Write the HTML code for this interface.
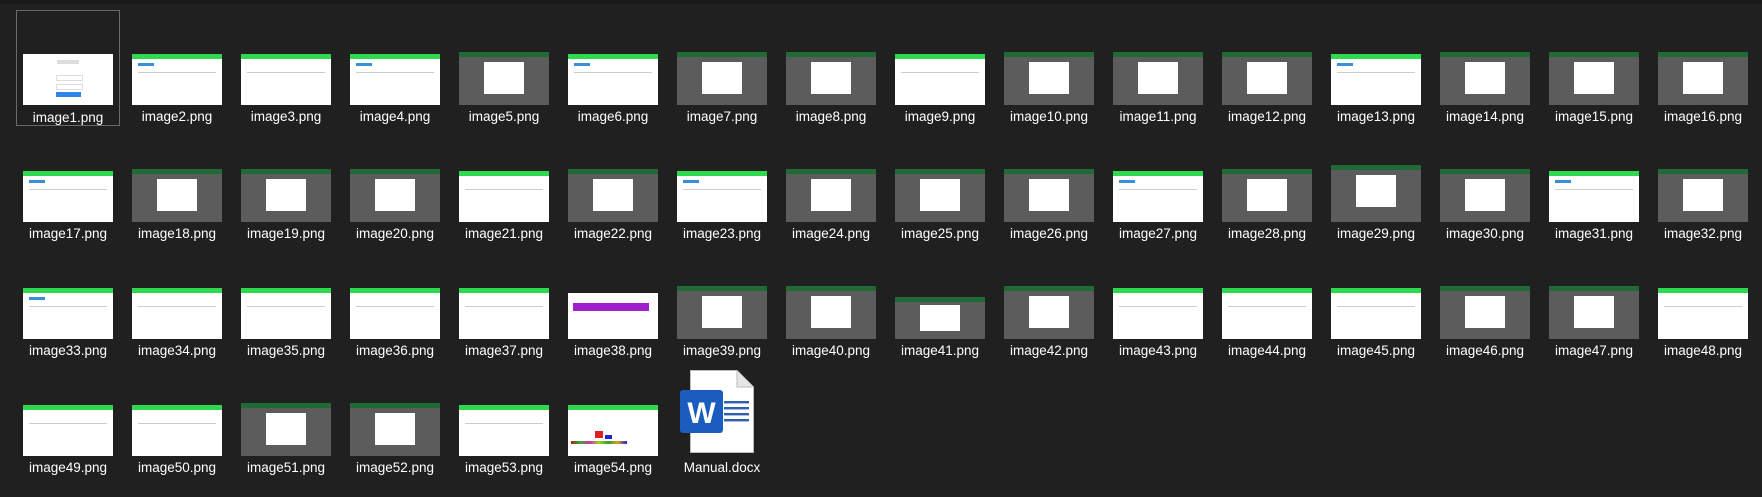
<!DOCTYPE html>
<html><head><meta charset="utf-8"><style>
body{margin:0;width:1762px;height:497px;background:#202020;overflow:hidden;font-family:"Liberation Sans",sans-serif;position:relative}
.top{position:absolute;left:0;top:0;width:1762px;height:4px;background:#191919}
.it{position:absolute;width:104px;height:116px}
.th{position:absolute;left:7px;bottom:21px;width:90px;height:51px;background:#fff;overflow:hidden}
.g:before{content:"";position:absolute;left:0;top:0;right:0;height:5px;background:#2ed84f}
.d{background:#5c5c5c;height:53px}
.d:before{content:"";position:absolute;left:0;top:0;right:0;height:5px;background:#1f6a35}
.d i{position:absolute;left:25px;top:10px;width:40px;height:32px;background:#fff}
.g b{position:absolute;left:6px;top:9px;width:16px;height:3px;background:#3a8fdc}
.g u{position:absolute;left:6px;top:18px;width:78px;height:1px;background:#ccc;text-decoration:none}
.lb{position:absolute;left:-10px;width:124px;top:99px;text-align:center;color:#fff;font-size:13.5px}
.sel{border:1px solid #6a6a6a;box-sizing:border-box}
</style></head><body><div class="top"></div>
<div class="it sel" style="left:16px;top:10px"><div class="th" style="left:6px;bottom:20px"><span style="position:absolute;left:34px;top:6px;width:22px;height:4px;background:#ddd"></span><span style="position:absolute;left:33px;top:21px;width:25px;height:4px;border:1px solid #ddd"></span><span style="position:absolute;left:33px;top:30px;width:25px;height:4px;border:1px solid #ddd"></span><span style="position:absolute;left:33px;top:38px;width:25px;height:5px;background:#2f86e8"></span></div><div class="lb" style="left:-11px">image1.png</div></div>
<div class="it" style="left:125px;top:10px"><div class="th g"><b></b><u></u></div><div class="lb">image2.png</div></div>
<div class="it" style="left:234px;top:10px"><div class="th g"><u></u></div><div class="lb">image3.png</div></div>
<div class="it" style="left:343px;top:10px"><div class="th g"><b></b><u></u></div><div class="lb">image4.png</div></div>
<div class="it" style="left:452px;top:10px"><div class="th d"><i></i></div><div class="lb">image5.png</div></div>
<div class="it" style="left:561px;top:10px"><div class="th g"><b></b><u></u></div><div class="lb">image6.png</div></div>
<div class="it" style="left:670px;top:10px"><div class="th d"><i></i></div><div class="lb">image7.png</div></div>
<div class="it" style="left:779px;top:10px"><div class="th d"><i></i></div><div class="lb">image8.png</div></div>
<div class="it" style="left:888px;top:10px"><div class="th g"><u></u></div><div class="lb">image9.png</div></div>
<div class="it" style="left:997px;top:10px"><div class="th d"><i></i></div><div class="lb">image10.png</div></div>
<div class="it" style="left:1106px;top:10px"><div class="th d"><i></i></div><div class="lb">image11.png</div></div>
<div class="it" style="left:1215px;top:10px"><div class="th d"><i></i></div><div class="lb">image12.png</div></div>
<div class="it" style="left:1324px;top:10px"><div class="th g"><b></b><u></u></div><div class="lb">image13.png</div></div>
<div class="it" style="left:1433px;top:10px"><div class="th d"><i></i></div><div class="lb">image14.png</div></div>
<div class="it" style="left:1542px;top:10px"><div class="th d"><i></i></div><div class="lb">image15.png</div></div>
<div class="it" style="left:1651px;top:10px"><div class="th d"><i></i></div><div class="lb">image16.png</div></div>

<div class="it" style="left:16px;top:127px"><div class="th g"><b></b><u></u></div><div class="lb">image17.png</div></div>
<div class="it" style="left:125px;top:127px"><div class="th d"><i></i></div><div class="lb">image18.png</div></div>
<div class="it" style="left:234px;top:127px"><div class="th d"><i></i></div><div class="lb">image19.png</div></div>
<div class="it" style="left:343px;top:127px"><div class="th d"><i></i></div><div class="lb">image20.png</div></div>
<div class="it" style="left:452px;top:127px"><div class="th g"><u></u></div><div class="lb">image21.png</div></div>
<div class="it" style="left:561px;top:127px"><div class="th d"><i></i></div><div class="lb">image22.png</div></div>
<div class="it" style="left:670px;top:127px"><div class="th g"><b></b><u></u></div><div class="lb">image23.png</div></div>
<div class="it" style="left:779px;top:127px"><div class="th d"><i></i></div><div class="lb">image24.png</div></div>
<div class="it" style="left:888px;top:127px"><div class="th d"><i></i></div><div class="lb">image25.png</div></div>
<div class="it" style="left:997px;top:127px"><div class="th d"><i></i></div><div class="lb">image26.png</div></div>
<div class="it" style="left:1106px;top:127px"><div class="th g"><b></b><u></u></div><div class="lb">image27.png</div></div>
<div class="it" style="left:1215px;top:127px"><div class="th d"><i></i></div><div class="lb">image28.png</div></div>
<div class="it" style="left:1324px;top:127px"><div class="th d" style="height:57px"><i></i></div><div class="lb">image29.png</div></div>
<div class="it" style="left:1433px;top:127px"><div class="th d"><i></i></div><div class="lb">image30.png</div></div>
<div class="it" style="left:1542px;top:127px"><div class="th g"><b></b><u></u></div><div class="lb">image31.png</div></div>
<div class="it" style="left:1651px;top:127px"><div class="th d"><i></i></div><div class="lb">image32.png</div></div>

<div class="it" style="left:16px;top:244px"><div class="th g"><b></b><u></u></div><div class="lb">image33.png</div></div>
<div class="it" style="left:125px;top:244px"><div class="th g"><u></u></div><div class="lb">image34.png</div></div>
<div class="it" style="left:234px;top:244px"><div class="th g"><u></u></div><div class="lb">image35.png</div></div>
<div class="it" style="left:343px;top:244px"><div class="th g"><u></u></div><div class="lb">image36.png</div></div>
<div class="it" style="left:452px;top:244px"><div class="th g"><u></u></div><div class="lb">image37.png</div></div>
<div class="it" style="left:561px;top:244px"><div class="th" style="height:46px"><span style="position:absolute;left:5px;top:10px;width:76px;height:8px;background:#a020d0"></span></div><div class="lb">image38.png</div></div>
<div class="it" style="left:670px;top:244px"><div class="th d"><i></i></div><div class="lb">image39.png</div></div>
<div class="it" style="left:779px;top:244px"><div class="th d"><i></i></div><div class="lb">image40.png</div></div>
<div class="it" style="left:888px;top:244px"><div class="th d" style="height:42px"><i style="top:8px;height:26px"></i></div><div class="lb">image41.png</div></div>
<div class="it" style="left:997px;top:244px"><div class="th d"><i></i></div><div class="lb">image42.png</div></div>
<div class="it" style="left:1106px;top:244px"><div class="th g"><u></u></div><div class="lb">image43.png</div></div>
<div class="it" style="left:1215px;top:244px"><div class="th g"><u></u></div><div class="lb">image44.png</div></div>
<div class="it" style="left:1324px;top:244px"><div class="th g"><u></u></div><div class="lb">image45.png</div></div>
<div class="it" style="left:1433px;top:244px"><div class="th d"><i></i></div><div class="lb">image46.png</div></div>
<div class="it" style="left:1542px;top:244px"><div class="th d"><i></i></div><div class="lb">image47.png</div></div>
<div class="it" style="left:1651px;top:244px"><div class="th g"><u></u></div><div class="lb">image48.png</div></div>

<div class="it" style="left:16px;top:361px"><div class="th g"><u></u></div><div class="lb">image49.png</div></div>
<div class="it" style="left:125px;top:361px"><div class="th g"><u></u></div><div class="lb">image50.png</div></div>
<div class="it" style="left:234px;top:361px"><div class="th d"><i></i></div><div class="lb">image51.png</div></div>
<div class="it" style="left:343px;top:361px"><div class="th d"><i></i></div><div class="lb">image52.png</div></div>
<div class="it" style="left:452px;top:361px"><div class="th g"><u></u></div><div class="lb">image53.png</div></div>
<div class="it" style="left:561px;top:361px"><div class="th g"><span style="position:absolute;left:27px;top:26px;width:8px;height:7px;background:#e02020"></span><span style="position:absolute;left:37px;top:30px;width:7px;height:4px;background:#2020e0"></span><span style="position:absolute;left:3px;top:36px;width:56px;height:3px;background:linear-gradient(90deg,#b02020,#30b030,#d030b0,#a0d020,#30a030,#e0a020,#2020e0)"></span></div><div class="lb">image54.png</div></div>
<div class="it" style="left:670px;top:361px">
<svg style="position:absolute;left:0;top:0" width="104" height="96" viewBox="0 0 104 96">
<path d="M20.5 9.5 H67 L83.5 26 V91.5 H20.5 Z" fill="#fff" stroke="#bbb"/>
<path d="M67 9.5 V26 H83.5" fill="#e6e6e6" stroke="#bbb"/>
<g fill="#2f5fb0"><rect x="54" y="40" width="25" height="2.4"/><rect x="54" y="46" width="25" height="2.4"/><rect x="54" y="52" width="25" height="2.4"/><rect x="54" y="58" width="25" height="2.4"/></g>
<rect x="10" y="29" width="43" height="43" rx="3" fill="#1a5dbe"/>
<text x="31.5" y="62" text-anchor="middle" fill="#fff" font-family="Liberation Sans" font-weight="bold" font-size="30">W</text>
</svg>
<div class="lb">Manual.docx</div></div>
</body></html>
